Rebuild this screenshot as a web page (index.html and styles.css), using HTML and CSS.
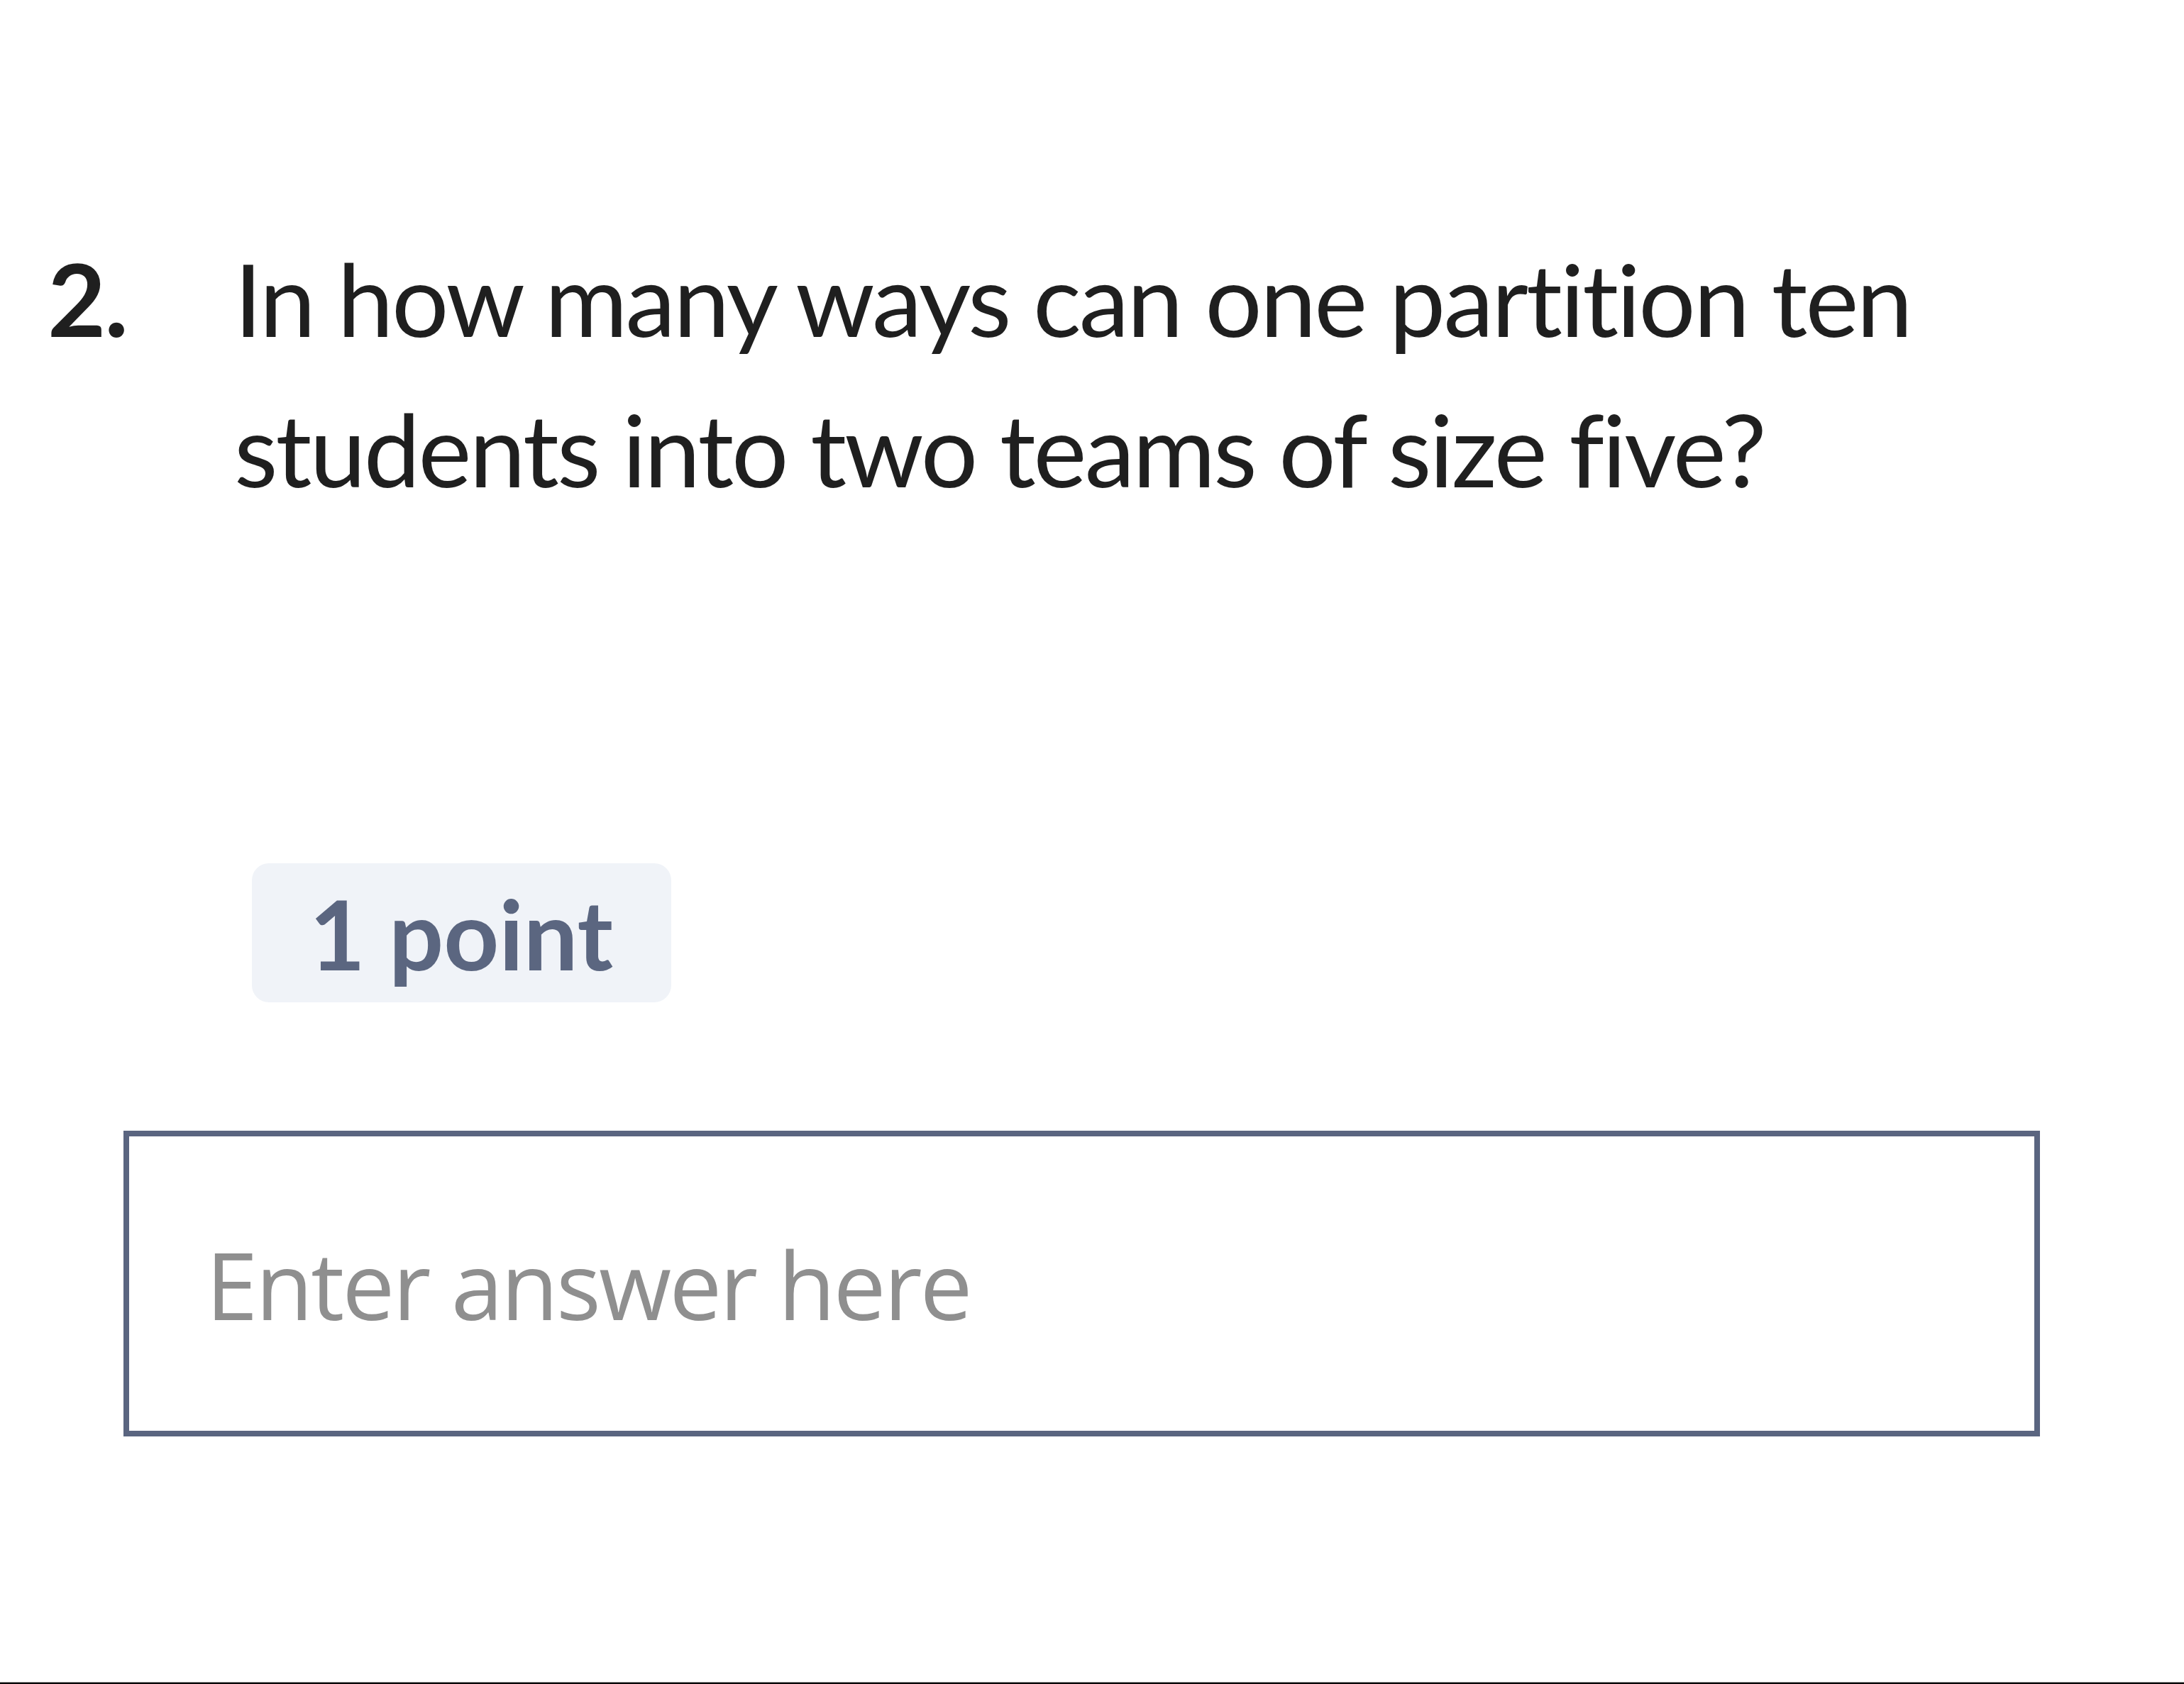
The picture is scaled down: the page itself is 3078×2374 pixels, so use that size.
FILE: index.html
```html
<!DOCTYPE html>
<html lang="en">
<head>
<meta charset="utf-8">
<title>Question 2</title>
<link rel="stylesheet" href="styles.css">
</head>
<body>
<div class="page">
  <div class="question">
    <div class="qnum">2.</div>
    <div class="qtext">In how many ways can one partition ten students into two teams of size five?</div>
  </div>
  <div class="points">1 point</div>
  <div class="answer">
    <input class="answer-input" type="text" placeholder="Enter answer here">
  </div>
</div>
<div class="rule"></div>
</body>
</html>
```
FILE: styles.css
```css
html, body {
  margin: 0;
  padding: 0;
  background: #ffffff;
}
body {
  font-family: Lato, "Noto Sans", sans-serif;
  color: #1f1f1f;
  font-variant-ligatures: none;
}
.page {
  height: 2371px;
  box-sizing: border-box;
  padding-top: 314px;
  display: flex;
  flex-direction: column;
  align-items: flex-start;
}
.question {
  display: flex;
  padding-left: 67px;
  font-size: 142px;
  line-height: 212px;
}
.qnum {
  width: 263px;
  flex: none;
  font-weight: 700;
  letter-spacing: -2px;
}
.qtext {
  width: 2500px;
  font-weight: 400;
  letter-spacing: -2.9px;
}
.points {
  margin-top: 479px;
  margin-left: 355px;
  height: 196px;
  padding: 0 82px 0 81px;
  display: flex;
  align-items: center;
  background: #f0f3f8;
  border-radius: 24px;
  color: #5b6680;
  font-weight: 700;
  font-size: 136px;
  box-sizing: border-box;
}
.answer {
  margin-top: 181px;
  margin-left: 174px;
  width: 2701px;
}
.answer-input {
  display: block;
  width: 100%;
  height: 431px;
  box-sizing: border-box;
  border: 8px solid #5a6580;
  border-radius: 0;
  padding: 0 0 0 108px;
  margin: 0;
  font-family: "Open Sans", "Noto Sans", sans-serif;
  font-size: 132px;
  letter-spacing: -3px;
  color: #1f1f1f;
  background: #ffffff;
  outline: none;
}
.answer-input::placeholder {
  color: #8f8f8f;
  opacity: 1;
}
.rule {
  height: 2px;
  border-top: 1px solid #a0a0a0;
  background: #000000;
}
```
